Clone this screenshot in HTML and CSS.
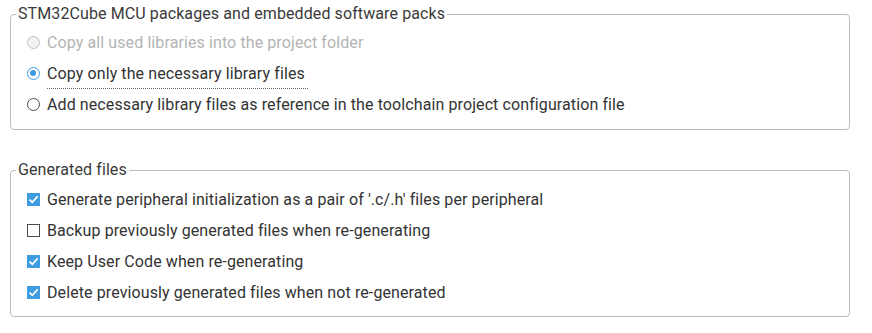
FILE: index.html
```html
<!DOCTYPE html>
<html lang="en">
<head>
<meta charset="utf-8">
<title>Code Generator</title>
<link rel="stylesheet" href="styles.css">
</head>
<body>
<div class="page">
  <fieldset class="group group-packs">
    <legend class="group-title">STM32Cube MCU packages and embedded software packs</legend>
    <div class="option disabled">
      <span class="radio"></span>
      <span class="label">Copy all used libraries into the project folder</span>
    </div>
    <div class="option">
      <span class="radio checked"></span>
      <span class="label focused">Copy only the necessary library files</span>
    </div>
    <div class="option">
      <span class="radio"></span>
      <span class="label">Add necessary library files as reference in the toolchain project configuration file</span>
    </div>
  </fieldset>

  <fieldset class="group group-files">
    <legend class="group-title">Generated files</legend>
    <div class="option">
      <span class="check checked"><svg viewBox="0 0 13 13" width="13" height="13"><path d="M2.6 6.6 L5.3 9.3 L10.6 3.4" fill="none" stroke="#fff" stroke-width="1.8"/></svg></span>
      <span class="label">Generate peripheral initialization as a pair of '.c/.h' files per peripheral</span>
    </div>
    <div class="option">
      <span class="check"></span>
      <span class="label">Backup previously generated files when re-generating</span>
    </div>
    <div class="option">
      <span class="check checked"><svg viewBox="0 0 13 13" width="13" height="13"><path d="M2.6 6.6 L5.3 9.3 L10.6 3.4" fill="none" stroke="#fff" stroke-width="1.8"/></svg></span>
      <span class="label">Keep User Code when re-generating</span>
    </div>
    <div class="option">
      <span class="check checked"><svg viewBox="0 0 13 13" width="13" height="13"><path d="M2.6 6.6 L5.3 9.3 L10.6 3.4" fill="none" stroke="#fff" stroke-width="1.8"/></svg></span>
      <span class="label">Delete previously generated files when not re-generated</span>
    </div>
  </fieldset>
</div>
</body>
</html>
```

FILE: styles.css
```css
html, body {
  margin: 0;
  padding: 0;
  background: #ffffff;
}

body {
  font-family: Roboto, "Liberation Sans", Arial, sans-serif;
  font-size: 16px;
  letter-spacing: 0.1px;
  color: #333333;
}

.page {
  padding: 5px 0 0 10px;
}

.group {
  box-sizing: border-box;
  width: 840px;
  margin: 0;
  border: 1px solid #b9bdc1;
  border-radius: 4px;
  padding: 4px 0 9px 16px;
}

.group-files {
  margin-top: 31px;
  padding-top: 5px;
  padding-bottom: 8px;
}

.group-title {
  margin-left: -11px;
  padding: 0 2px;
  line-height: 18px;
  height: 18px;
  color: #3a3a3a;
}

.option {
  display: flex;
  align-items: center;
  height: 31px;
}

.label {
  margin-left: 7px;
  line-height: 18px;
  white-space: nowrap;
}

.label.focused {
  padding-bottom: 5px;
  margin-bottom: -6px;
  border-bottom: 1px dotted #6a6a6a;
  padding-right: 3px;
}

.disabled .label {
  color: #b4b4b4;
}

.radio {
  box-sizing: border-box;
  width: 13px;
  height: 13px;
  flex: none;
  border-radius: 50%;
  border: 1px solid #4d4d4d;
  background: #ffffff;
  position: relative;
}

.disabled .radio {
  border-color: #c2c2c2;
  background: #f2f2f2;
}

.radio.checked {
  border: 1.5px solid #3e9be0;
}

.radio.checked::after {
  content: "";
  position: absolute;
  left: 2px;
  top: 2px;
  width: 6px;
  height: 6px;
  border-radius: 50%;
  background: #3e9be0;
}

.check {
  box-sizing: border-box;
  width: 13px;
  height: 13px;
  flex: none;
  border: 1px solid #4d4d4d;
  background: #ffffff;
  display: block;
}

.check.checked {
  border: none;
  background: #3e9de0;
}

.check svg {
  display: block;
}
```
